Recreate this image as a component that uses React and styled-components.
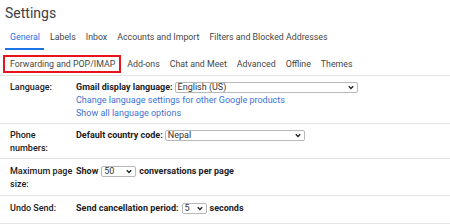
import React from "react";
import styled, { createGlobalStyle } from "styled-components";

const Global = createGlobalStyle`
  html, body {
    margin: 0;
    padding: 0;
    background: #fff;
  }
  body {
    font-family: Roboto, "Liberation Sans", Arial, sans-serif;
    color: #202124;
    -webkit-font-smoothing: antialiased;
  }
`;

const Page = styled.div`
  width: 450px;
  height: 224px;
  overflow: hidden;
  background: #fff;
`;

const Title = styled.h1`
  margin: 0;
  padding: 4px 0 0 5px;
  height: 18px;
  font-size: 14px;
  font-weight: 400;
  line-height: 18px;
  color: #3c4043;
`;

const TabRow = styled.div`
  display: flex;
  align-items: center;
  gap: 10px;
  padding-left: ${(p) => p.$pl}px;
  height: ${(p) => p.$h}px;
`;

const TabRowBottom = styled(TabRow)`
  border-bottom: 1px solid #e3e3e3;
`;

const Tab = styled.div`
  position: relative;
  font-size: 8.8px;
  line-height: 12px;
  white-space: nowrap;
  color: ${(p) => (p.$active ? "#1a73e8" : "#444746")};

  ${(p) =>
    p.$active &&
    `
    &::after {
      content: "";
      position: absolute;
      left: -5px;
      right: -4px;
      bottom: -7px;
      height: 2px;
      background: #1a73e8;
    }
  `}

  ${(p) =>
    p.$boxed &&
    `
    margin-left: -6px;
    margin-right: -4px;
    padding: 1px 4px 1px 5px;
    border: 2px solid #e8131b;
  `}
`;

const Row = styled.div`
  display: flex;
  border-bottom: 1px solid #e3e3e3;
  padding: ${(p) => p.$pt}px 0 ${(p) => p.$pb}px 10px;
  font-size: 9px;
  line-height: 13px;
`;

const Label = styled.div`
  width: 66px;
  flex: none;
  font-weight: 500;
  color: #202124;
`;

const Value = styled.div`
  display: flex;
  flex-direction: column;
  color: #202124;
`;

const Line = styled.div`
  display: flex;
  align-items: center;
  gap: 2px;
  height: 13px;
  white-space: nowrap;
`;

const Strong = styled.span`
  font-weight: 700;
`;

const Link = styled.a`
  color: #3a73d6;
  text-decoration: none;
  white-space: nowrap;
`;

const Select = styled.div`
  display: flex;
  align-items: center;
  justify-content: space-between;
  box-sizing: border-box;
  width: ${(p) => p.$w}px;
  height: 11px;
  padding: 0 3px 0 2px;
  border: 1px solid #b8b8b8;
  border-radius: 2px;
  background: #fff;
  font-size: 9px;
  font-weight: 400;
  color: #333;
  margin: ${(p) => p.$m || "0"};
`;

const Chevron = () => (
  <svg width="6" height="5" viewBox="0 0 6 5">
    <path d="M0.8 1.2 L3 3.4 L5.2 1.2" fill="none" stroke="#222" strokeWidth="1.4" />
  </svg>
);

function Dropdown({ w, m, children }) {
  return (
    <Select $w={w} $m={m}>
      <span>{children}</span>
      <Chevron />
    </Select>
  );
}

export default function App() {
  return (
    <Page>
      <Global />
      <Title>Settings</Title>
      <TabRow $pl={10} $h={30}>
        <Tab $active>General</Tab>
        <Tab>Labels</Tab>
        <Tab>Inbox</Tab>
        <Tab>Accounts and Import</Tab>
        <Tab>Filters and Blocked Addresses</Tab>
      </TabRow>
      <TabRowBottom $pl={9} $h={23}>
        <Tab $boxed>Forwarding and POP/IMAP</Tab>
        <Tab>Add-ons</Tab>
        <Tab>Chat and Meet</Tab>
        <Tab>Advanced</Tab>
        <Tab>Offline</Tab>
        <Tab>Themes</Tab>
      </TabRowBottom>

      <Row $pt={5} $pb={3}>
        <Label>Language:</Label>
        <Value>
          <Line>
            <Strong>Gmail display language:</Strong>
            <Dropdown w={183}>English (US)</Dropdown>
          </Line>
          <Line>
            <Link href="#">Change language settings for other Google products</Link>
          </Line>
          <Line>
            <Link href="#">Show all language options</Link>
          </Line>
        </Value>
      </Row>

      <Row $pt={5} $pb={3}>
        <Label>
          Phone
          <br />
          numbers:
        </Label>
        <Value>
          <Line>
            <Strong>Default country code:</Strong>
            <Dropdown w={140}>Nepal</Dropdown>
          </Line>
        </Value>
      </Row>

      <Row $pt={6} $pb={4}>
        <Label>
          Maximum page
          <br />
          size:
        </Label>
        <Value>
          <Line>
            <Strong>Show</Strong>
            <Dropdown w={35} m="0 1px">50</Dropdown>
            <Strong>conversations per page</Strong>
          </Line>
        </Value>
      </Row>

      <Row $pt={6} $pb={8}>
        <Label>Undo Send:</Label>
        <Value>
          <Line>
            <Strong>Send cancellation period:</Strong>
            <Dropdown w={25} m="0 1px">5</Dropdown>
            <Strong>seconds</Strong>
          </Line>
        </Value>
      </Row>
    </Page>
  );
}
